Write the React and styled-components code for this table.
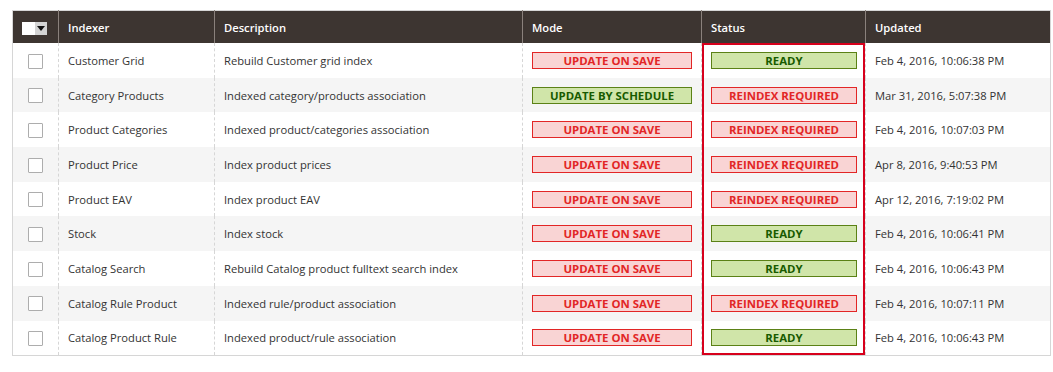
import styled, { createGlobalStyle } from 'styled-components'

const GlobalStyle = createGlobalStyle`
	body {
		margin: 0;
		background: #fff;
		font-family: "Open Sans", "Liberation Sans", sans-serif;
	}
`

const Page = styled.div`
	padding: 10px 0 0 12px;
`

const Grid = styled.table`
	width: 1038px;
	border-collapse: collapse;
	table-layout: fixed;
	border: 1px solid #d6d6d6;
	font-size: 11.2px;
	color: #333;
`

const HeadCell = styled.th`
	background: #3d3531;
	color: #fff;
	font-weight: 600;
	text-align: left;
	height: 32px;
	padding: 0 9px;
	border-left: 1px solid #8a817c;
	vertical-align: middle;
	&:first-child {
		border-left: none;
		padding: 0 0 0 9px;
	}
`

const Row = styled.tr`
	height: 34.7px;
	background: ${p => (p.$odd ? '#f5f5f5' : '#fff')};
`

const Cell = styled.td`
	padding: 0 9px;
	border-left: 1px dashed #d6d6d6;
	vertical-align: middle;
	white-space: nowrap;
	&:first-child {
		border-left: none;
		text-align: center;
		padding: 0;
	}
`

const StatusCell = styled(Cell)`
	padding: 0 8px 0 9px;
	box-shadow:
		inset 2px 0 0 #d7001c,
		inset -2px 0 0 #d7001c
		${p => (p.$first ? ', inset 0 2px 0 #d7001c' : '')}
		${p => (p.$last ? ', inset 0 -2px 0 #d7001c' : '')};
`

const Box = styled.span`
	display: inline-block;
	width: 13px;
	height: 13px;
	border: 1px solid #adadad;
	border-radius: 1px;
	background: #fff;
	vertical-align: middle;
`

const MassSelect = styled.span`
	display: inline-flex;
	align-items: stretch;
	height: 13px;
	vertical-align: middle;
`

const MassBox = styled.span`
	width: 13px;
	background: #fff;
`

const MassArrow = styled.span`
	width: 12px;
	background: #d4d4d4;
	display: flex;
	align-items: center;
	justify-content: center;
	&::after {
		content: '';
		border-left: 4px solid transparent;
		border-right: 4px solid transparent;
		border-top: 5px solid #111;
	}
`

const Badge = styled.div`
	height: 15px;
	line-height: 15px;
	text-align: center;
	font-size: 11.4px;
	font-weight: 700;
	text-transform: uppercase;
	background: ${p => (p.$ok ? '#d0e5a9' : '#f9d4d4')};
	border: 1px solid ${p => (p.$ok ? '#5b8116' : '#e22626')};
	color: ${p => (p.$ok ? '#185b00' : '#e22626')};
`

const rows = [
	['Customer Grid', 'Rebuild Customer grid index', false, true, 'Feb 4, 2016, 10:06:38 PM'],
	['Category Products', 'Indexed category/products association', true, false, 'Mar 31, 2016, 5:07:38 PM'],
	['Product Categories', 'Indexed product/categories association', false, false, 'Feb 4, 2016, 10:07:03 PM'],
	['Product Price', 'Index product prices', false, false, 'Apr 8, 2016, 9:40:53 PM'],
	['Product EAV', 'Index product EAV', false, false, 'Apr 12, 2016, 7:19:02 PM'],
	['Stock', 'Index stock', false, true, 'Feb 4, 2016, 10:06:41 PM'],
	['Catalog Search', 'Rebuild Catalog product fulltext search index', false, true, 'Feb 4, 2016, 10:06:43 PM'],
	['Catalog Rule Product', 'Indexed rule/product association', false, false, 'Feb 4, 2016, 10:07:11 PM'],
	['Catalog Product Rule', 'Indexed product/rule association', false, true, 'Feb 4, 2016, 10:06:43 PM'],
]

export default function App() {
	return (
		<>
			<GlobalStyle />
			<Page>
				<Grid>
					<colgroup>
						<col style={{ width: 46 }} />
						<col style={{ width: 156 }} />
						<col style={{ width: 308 }} />
						<col style={{ width: 179 }} />
						<col style={{ width: 164 }} />
						<col style={{ width: 185 }} />
					</colgroup>
					<thead>
						<tr>
							<HeadCell>
								<MassSelect>
									<MassBox />
									<MassArrow />
								</MassSelect>
							</HeadCell>
							<HeadCell>Indexer</HeadCell>
							<HeadCell>Description</HeadCell>
							<HeadCell>Mode</HeadCell>
							<HeadCell>Status</HeadCell>
							<HeadCell>Updated</HeadCell>
						</tr>
					</thead>
					<tbody>
						{rows.map(([name, desc, schedule, ready, updated], i) => (
							<Row key={name} $odd={i % 2 === 1}>
								<Cell><Box /></Cell>
								<Cell>{name}</Cell>
								<Cell>{desc}</Cell>
								<Cell>
									<Badge $ok={schedule}>{schedule ? 'Update by Schedule' : 'Update on Save'}</Badge>
								</Cell>
								<StatusCell $first={i === 0} $last={i === rows.length - 1}>
									<Badge $ok={ready}>{ready ? 'Ready' : 'Reindex required'}</Badge>
								</StatusCell>
								<Cell>{updated}</Cell>
							</Row>
						))}
					</tbody>
				</Grid>
			</Page>
		</>
	)
}
